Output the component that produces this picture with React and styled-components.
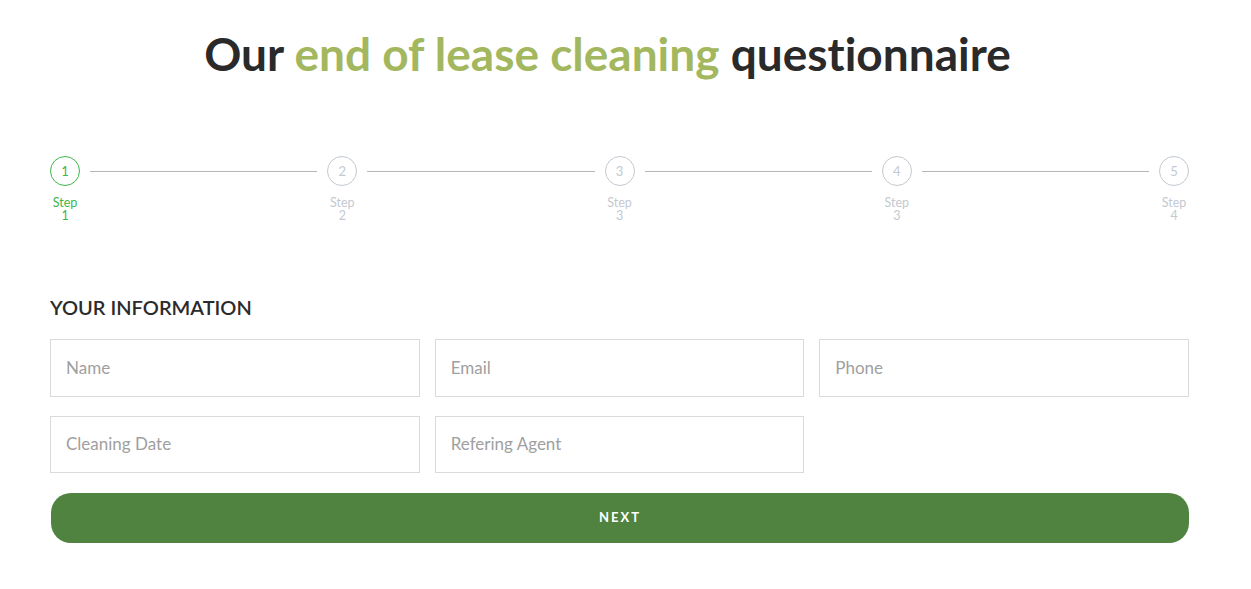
import React from "react";
import styled, { createGlobalStyle } from "styled-components";

const Global = createGlobalStyle`
  html, body { margin: 0; padding: 0; background: #fff; }
  body { font-family: Lato, "Noto Sans", sans-serif; font-variant-ligatures: none; }
  * { box-sizing: border-box; }
`;

const Page = styled.div`
  width: 1251px;
  padding: 26px 62px 0 50px;
`;

const Title = styled.h1`
  margin: 0;
  text-align: center;
  font-size: 46px;
  font-weight: 700;
  line-height: 56px;
  color: #2a2a2a;
  padding-right: 24px;
  font-variant-ligatures: none;
`;

const Accent = styled.span`
  color: #a3b75e;
`;

const Stepper = styled.div`
  display: flex;
  align-items: flex-start;
  margin-top: 74px;
`;

const Step = styled.div`
  width: 30px;
  display: flex;
  flex-direction: column;
  align-items: center;
  color: ${(p) => (p.$active ? "#3db54a" : "#c3c9d1")};
`;

const Circle = styled.div`
  width: 30px;
  height: 30px;
  border-radius: 50%;
  border: 1px solid currentColor;
  display: flex;
  align-items: center;
  justify-content: center;
  font-size: 13px;
`;

const StepLabel = styled.div`
  margin-top: 10px;
  font-size: 12.5px;
  line-height: 13px;
  text-align: center;
`;

const Line = styled.div`
  flex: 1;
  height: 1px;
  background: #b4b6bc;
  margin: 15px 10px 0;
`;

const SectionTitle = styled.h2`
  margin: 73px 0 0;
  font-size: 20px;
  font-weight: 600;
  line-height: 24px;
  color: #2b2b2b;
`;

const Grid = styled.div`
  display: grid;
  grid-template-columns: repeat(3, 1fr);
  column-gap: 15px;
  row-gap: 19px;
  margin-top: 20px;
`;

const Input = styled.input`
  height: ${(p) => p.$h || 58}px;
  border: 1px solid #dadada;
  padding: 0 15px 2px;
  font-family: Lato, "Noto Sans", sans-serif;
  font-size: 17px;
  color: #333;
  outline: none;
  width: 100%;
  &::placeholder { color: #a0a0a0; }
`;

const Button = styled.button`
  margin: 20px 0 0 1px;
  width: calc(100% - 1px);
  height: 50px;
  border: none;
  border-radius: 20px;
  background: #508340;
  color: #fff;
  font-family: Lato, "Noto Sans", sans-serif;
  font-weight: 700;
  font-size: 13px;
  letter-spacing: 2px;
  padding: 0 0 2px;
  cursor: pointer;
`;

const steps = [
  { n: 1, label: "1" },
  { n: 2, label: "2" },
  { n: 3, label: "3" },
  { n: 4, label: "3" },
  { n: 5, label: "4" },
];

export default function App() {
  return (
    <>
      <Global />
      <Page>
        <Title>
          Our <Accent>end of lease cleaning</Accent> {"quest\u200Cionnaire"}
        </Title>
        <Stepper>
          {steps.map((s, i) => (
            <React.Fragment key={s.n}>
              {i > 0 && <Line />}
              <Step $active={i === 0}>
                <Circle>{s.n}</Circle>
                <StepLabel>
                  Step
                  <br />
                  {s.label}
                </StepLabel>
              </Step>
            </React.Fragment>
          ))}
        </Stepper>
        <SectionTitle>YOUR INFORMATION</SectionTitle>
        <Grid>
          <Input placeholder="Name" />
          <Input placeholder="Email" />
          <Input placeholder="Phone" />
          <Input placeholder="Cleaning Date" $h={57} />
          <Input placeholder="Refering Agent" $h={57} />
        </Grid>
        <Button>NEXT</Button>
      </Page>
    </>
  );
}
